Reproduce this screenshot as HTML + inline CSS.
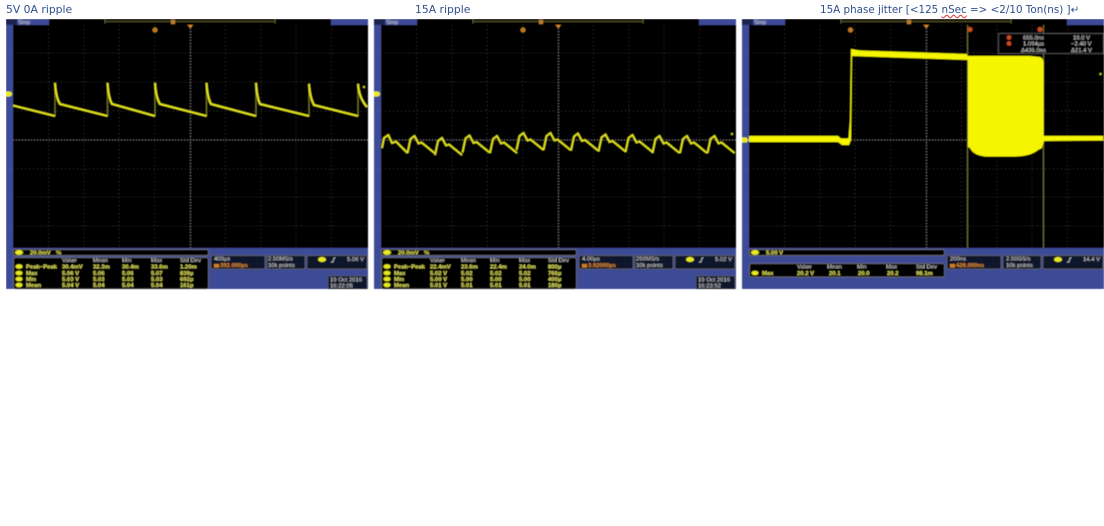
<!DOCTYPE html>
<html><head><meta charset="utf-8"><style>
html,body{margin:0;padding:0;background:#fff;width:1104px;height:526px;overflow:hidden}
svg{display:block;position:absolute;left:0;top:0}
.h{position:absolute;top:3px;font:11px "DejaVu Sans","Liberation Sans",sans-serif;color:#2f4f8f;white-space:pre;line-height:14px}
svg text{font-family:"Liberation Sans",sans-serif;font-size:5.9px;font-weight:bold;fill:#e8e860}
.w{fill:#d5d5d5!important;font-weight:normal}
.o{fill:#e8902a!important}
.k{fill:#111!important}
</style></head><body>
<div class="h" style="left:6px;font-size:10.8px">5V 0A ripple</div>
<div class="h" style="left:415px;font-size:10.8px">15A ripple</div>
<div class="h" style="left:820px;font-size:10.35px">15A phase jitter [&lt;125 <span style="text-decoration:underline wavy #e03030 1px">nSec</span> =&gt; &lt;2/10 Ton(ns) ]↵</div>
<svg width="1104" height="526" viewBox="0 0 1104 526">
<defs>
<filter id="b" x="0" y="0" width="100%" height="100%"><feGaussianBlur stdDeviation="0.42"/></filter>
<g id="frame">
<rect x="6" y="19" width="362" height="270" fill="#3d4b96"/>
<rect x="13" y="25" width="355" height="223" fill="#000"/>
<rect x="49" y="19" width="282" height="6" fill="#000"/>
<rect x="6" y="19" width="11" height="6" fill="#1a2450"/>
<path d="M105 21.500H275M105 19.500V23.500M275 19.500V23.500" stroke="#6f6f36" stroke-width="0.8" fill="none"/>
<g stroke="#333" stroke-width="0.8" stroke-dasharray="1 3" fill="none">
<path d="M48.500 25V248M84 25V248M119 25V248M154.500 25V248M225.500 25V248M261 25V248M296 25V248M331.500 25V248"/>
<path d="M13 53H368M13 82H368M13 111H368M13 169H368M13 197H368M13 226H368"/>
</g>
<path d="M190.500 25V248M13 140H368" stroke="#8a8a8a" stroke-width="0.8" stroke-dasharray="1 2" fill="none"/>
<path d="M187.500 25H193L190.300 28Z" fill="#e8902a"/>
<rect x="171" y="20" width="4" height="4" fill="#c08030"/>
</g>
<g id="panel">
<rect x="13.500" y="249.500" width="195" height="6" rx="1.500" fill="#000" stroke="#777" stroke-width="0.7"/>
<rect x="211" y="255.500" width="54" height="13.500" rx="1.500" fill="#10142c" stroke="#666" stroke-width="0.7"/>
<rect x="267" y="255.500" width="38" height="13.500" rx="1.500" fill="#10142c" stroke="#666" stroke-width="0.7"/>
<rect x="307" y="255.500" width="60" height="13.500" rx="1.500" fill="#10142c" stroke="#666" stroke-width="0.7"/>
<ellipse cx="19" cy="252.500" rx="4" ry="2.500" fill="#e8e820"/>
<ellipse cx="322" cy="259.500" rx="4" ry="2.500" fill="#e8e820"/>
<path d="M331 262L333 262L334 258L335.500 258" stroke="#ddd" stroke-width="0.7" fill="none"/>
<rect x="214" y="264" width="5" height="3.500" fill="#d08020"/>
</g>
<path id="saw" d="M0 17L3 3L7 0L11 7.500L14 6.500L27 17" fill="none" stroke="#e8e820" stroke-width="1.700"/>
</defs>

<g filter="url(#b)">
<use href="#frame"/><use href="#frame" x="368"/><use href="#frame" x="736"/>
<use href="#panel"/><use href="#panel" x="368"/><use href="#panel" x="736"/>

<!-- scope 1 -->
<circle cx="155" cy="30" r="2.500" fill="#c07a20"/>
<path d="M6 91.500H10.500L12.500 94L10.500 96.500H6Z" fill="#e8e820"/>
<path d="M55 116V83M107.500 116V83M155 116V83M206.500 116V83M256 116V83M309 116V84M358 116V84" stroke="#8f8f30" stroke-width="0.8" fill="none"/>
<path d="M13 105.500L55 116M55 83Q56 98 60 104L107.500 116M107.500 83Q108.500 98 112 104L155 116M155 83Q156 98 160 104L206.500 116M206.500 83Q207.500 98 211 104L256 116M256 83Q257 98 260 104L309 116M309 84Q310 98 314 105L358 116M358 84Q359 98 367 107" fill="none" stroke="#e8e820" stroke-width="1.900"/>
<circle cx="364" cy="87" r="1" fill="#e8e820"/>
<text x="30" y="254.500">20.0mV</text><text x="56" y="254.500">%</text>
<rect x="13.500" y="257.500" width="195" height="31.500" rx="2" fill="#000" stroke="#777" stroke-width="0.7"/>
<g fill="#e8e820"><ellipse cx="19" cy="266.500" rx="3.500" ry="2.300"/><ellipse cx="19" cy="273" rx="3.500" ry="2.300"/><ellipse cx="19" cy="279" rx="3.500" ry="2.300"/><ellipse cx="19" cy="285" rx="3.500" ry="2.300"/></g>
<text class="w" x="62" y="262">Value</text><text class="w" x="93" y="262">Mean</text><text class="w" x="122" y="262">Min</text><text class="w" x="151" y="262">Max</text><text class="w" x="180" y="262">Std Dev</text>
<text x="26" y="268.500">Peak−Peak</text><text x="62" y="268.500">30.4mV</text><text x="93" y="268.500">32.3m</text><text x="122" y="268.500">30.4m</text><text x="151" y="268.500">33.6m</text><text x="180" y="268.500">1.20m</text>
<text x="26" y="275">Max</text><text x="62" y="275">5.06 V</text><text x="93" y="275">5.06</text><text x="122" y="275">5.06</text><text x="151" y="275">5.07</text><text x="180" y="275">839µ</text>
<text x="26" y="281">Min</text><text x="62" y="281">5.03 V</text><text x="93" y="281">5.03</text><text x="122" y="281">5.03</text><text x="151" y="281">5.03</text><text x="180" y="281">692µ</text>
<text x="26" y="287">Mean</text><text x="62" y="287">5.04 V</text><text x="93" y="287">5.04</text><text x="122" y="287">5.04</text><text x="151" y="287">5.04</text><text x="180" y="287">161µ</text>
<text class="w" x="214" y="260.500">400µs</text><text class="o" x="220" y="267">392.000µs</text>
<text class="w" x="268" y="260.500">2.50MS/s</text><text class="w" x="268" y="267">10k points</text>
<text class="w" x="347" y="261">5.06 V</text>
<rect x="328" y="276" width="39" height="13" fill="#10142c" stroke="#666" stroke-width="0.6"/>
<text class="w" x="330" y="281.500">19 Oct  2016</text><text class="w" x="330" y="287.500">16:22:05</text>
<text class="w" x="18" y="24">Stop</text>

<!-- scope 2 -->
<circle cx="523" cy="30" r="2.500" fill="#c07a20"/>
<path d="M374 91.500H378.500L380.500 94L378.500 96.500H374Z" fill="#e8e820"/>
<path d="M382 148L384 138L388.300 135L392 143L396 141.500L407.500 153" fill="none" stroke="#e8e820" stroke-width="1.700"/>
<use href="#saw" x="407.500" y="136"/><use href="#saw" x="435" y="138"/><use href="#saw" x="462.500" y="135.500"/><use href="#saw" x="490" y="136"/><use href="#saw" x="516.500" y="133"/><use href="#saw" x="543.500" y="133"/><use href="#saw" x="571" y="133.500"/><use href="#saw" x="598.500" y="134.500"/><use href="#saw" x="625.500" y="135"/><use href="#saw" x="652.500" y="136"/><use href="#saw" x="680" y="136"/><use href="#saw" x="707.500" y="136"/>
<circle cx="732" cy="134" r="1" fill="#e8e820"/>
<text x="398" y="254.500">20.0mV</text><text x="424" y="254.500">%</text>
<rect x="381.500" y="257.500" width="195" height="31.500" rx="2" fill="#000" stroke="#777" stroke-width="0.7"/>
<g fill="#e8e820"><ellipse cx="387" cy="266.500" rx="3.500" ry="2.300"/><ellipse cx="387" cy="273" rx="3.500" ry="2.300"/><ellipse cx="387" cy="279" rx="3.500" ry="2.300"/><ellipse cx="387" cy="285" rx="3.500" ry="2.300"/></g>
<text class="w" x="430" y="262">Value</text><text class="w" x="461" y="262">Mean</text><text class="w" x="490" y="262">Min</text><text class="w" x="519" y="262">Max</text><text class="w" x="548" y="262">Std Dev</text>
<text x="394" y="268.500">Peak−Peak</text><text x="430" y="268.500">22.4mV</text><text x="461" y="268.500">23.6m</text><text x="490" y="268.500">22.4m</text><text x="519" y="268.500">24.0m</text><text x="548" y="268.500">800µ</text>
<text x="394" y="275">Max</text><text x="430" y="275">5.02 V</text><text x="461" y="275">5.02</text><text x="490" y="275">5.02</text><text x="519" y="275">5.02</text><text x="548" y="275">766µ</text>
<text x="394" y="281">Min</text><text x="430" y="281">5.00 V</text><text x="461" y="281">5.00</text><text x="490" y="281">5.00</text><text x="519" y="281">5.00</text><text x="548" y="281">400µ</text>
<text x="394" y="287">Mean</text><text x="430" y="287">5.01 V</text><text x="461" y="287">5.01</text><text x="490" y="287">5.01</text><text x="519" y="287">5.01</text><text x="548" y="287">180µ</text>
<text class="w" x="582" y="260.500">4.00µs</text><text class="o" x="588" y="267">3.92000µs</text>
<text class="w" x="636" y="260.500">250MS/s</text><text class="w" x="636" y="267">10k points</text>
<text class="w" x="715" y="261">5.02 V</text>
<rect x="696" y="276" width="39" height="13" fill="#10142c" stroke="#666" stroke-width="0.6"/>
<text class="w" x="698" y="281.500">19 Oct  2016</text><text class="w" x="698" y="287.500">16:23:52</text>
<text class="w" x="386" y="24">Stop</text>

<!-- scope 3 -->
<circle cx="850.500" cy="30" r="2.500" fill="#c07a20"/>
<circle cx="970" cy="29.500" r="2.500" fill="#d04a20"/>
<circle cx="1040" cy="29.500" r="2.500" fill="#d04a20"/>
<path d="M967.500 25V248M1043.500 25V248" stroke="#6a6a30" stroke-width="1"/>
<path d="M742 137.500H746.500L748.500 140L746.500 142.500H742Z" fill="#e8e820"/>
<path d="M749 136H838L841 138.500H848.500L850 120L851 49L860 50.500L967 54V56L1030 56L1040 57Q1043 58 1043.500 62V136L1103 136V140.500L1044 141L1042 148L1038 150Q1030 157 1010 156.500H985Q973 155 970 148L968 147V60L852 56L851 140L849 145H842L838 142L749 142Z" fill="#f5f500"/>
<circle cx="1100.500" cy="74" r="1" fill="#e8e820"/>
<rect x="998.500" y="33.500" width="105" height="20" fill="#000" stroke="#666" stroke-width="0.7"/>
<circle cx="1009" cy="37.500" r="2.300" fill="#d04a20"/><circle cx="1009" cy="43.500" r="2.300" fill="#d04a20"/>
<text class="w" x="1023" y="39.500">656.0ns</text><text class="w" x="1073" y="39.500">19.0 V</text>
<text class="w" x="1023" y="45.500">1.094µs</text><text class="w" x="1071" y="45.500">−2.40 V</text>
<text class="w" x="1021" y="52">Δ436.0ns</text><text class="w" x="1071" y="52">Δ21.4 V</text>
<text x="766" y="254.500">5.00 V</text>
<rect x="749.500" y="263.500" width="195" height="13.500" rx="2" fill="#000" stroke="#777" stroke-width="0.7"/>
<ellipse cx="755" cy="273" rx="3.500" ry="2.300" fill="#e8e820"/>
<text class="w" x="797" y="268.500">Value</text><text class="w" x="827" y="268.500">Mean</text><text class="w" x="857" y="268.500">Min</text><text class="w" x="886" y="268.500">Max</text><text class="w" x="916" y="268.500">Std Dev</text>
<text x="762" y="275">Max</text><text x="797" y="275">20.2 V</text><text x="829" y="275">20.1</text><text x="858" y="275">20.0</text><text x="887" y="275">20.2</text><text x="916" y="275">98.1m</text>
<text class="w" x="950" y="260.500">200ns</text><text class="o" x="956" y="267">428.000ns</text>
<text class="w" x="1006" y="260.500">2.50GS/s</text><text class="w" x="1006" y="267">10k points</text>
<text class="w" x="1083" y="261">14.4 V</text>
<text class="w" x="754" y="24">Stop</text>
</g>
</svg>
</body></html>
